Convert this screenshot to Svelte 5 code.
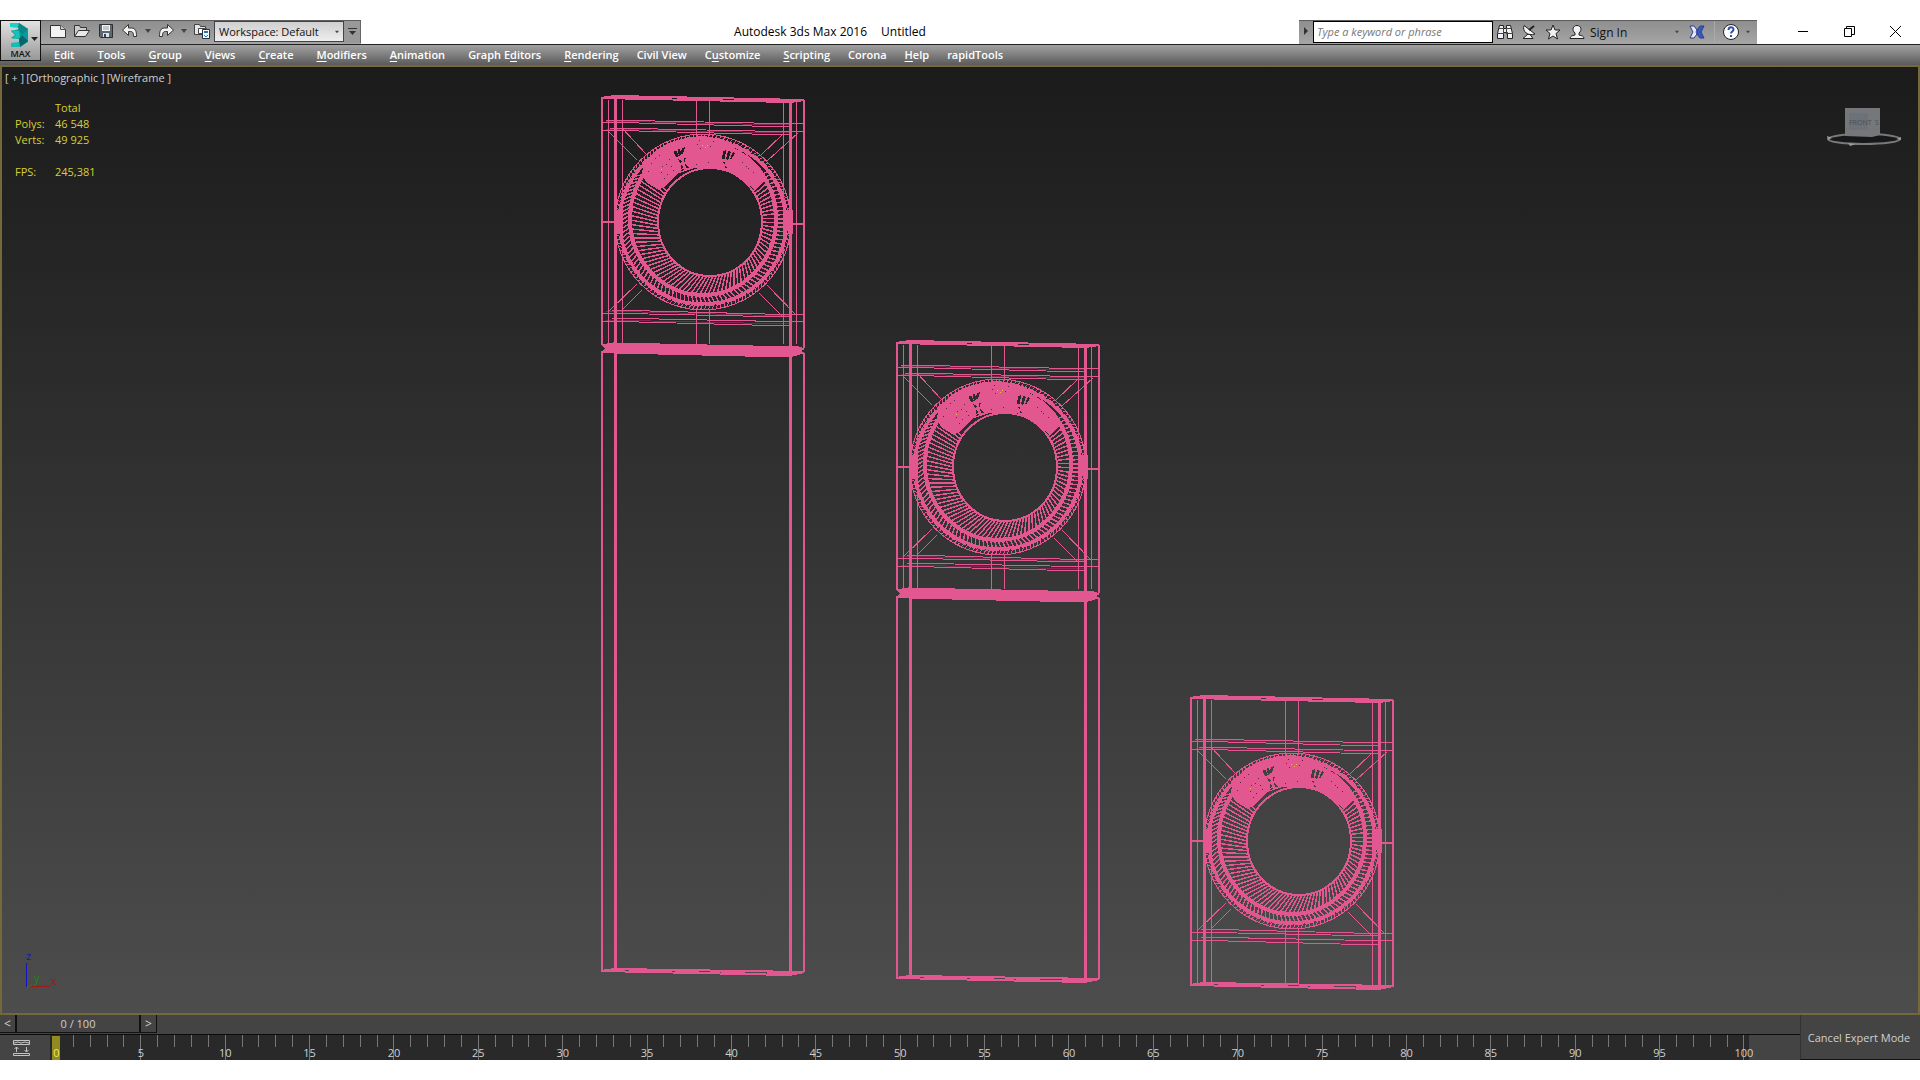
<script lang="ts">
    let keyword = $state('');
    let workspace = $state('Workspace: Default');

    // `key` is the index of the underlined letter, `wide` leaves more room after the item
    const menus = [
        { name: 'Edit', key: 0, wide: true },
        { name: 'Tools', key: 0, wide: true },
        { name: 'Group', key: 0, wide: true },
        { name: 'Views', key: 0, wide: true },
        { name: 'Create', key: 0, wide: true },
        { name: 'Modifiers', key: 0, wide: true },
        { name: 'Animation', key: 0, wide: true },
        { name: 'Graph Editors', key: 7, wide: true },
        { name: 'Rendering', key: 0, wide: false },
        { name: 'Civil View', key: -1, wide: false },
        { name: 'Customize', key: 1, wide: true },
        { name: 'Scripting', key: 0, wide: false },
        { name: 'Corona', key: -1, wide: false },
        { name: 'Help', key: 0, wide: false },
        { name: 'rapidTools', key: -1, wide: false },
    ];

    const frames = Array.from({ length: 101 }, (_, i) => i);

    // speaker cabinets: position of the head, height above it and total height
    const models = [
        { x: 601, y: 98, top: 0, bottom: 873, column: true },
        { x: 896, y: 343, top: 0, bottom: 635, column: true },
        { x: 1190, y: 717, top: -19, bottom: 268, column: false },
    ];

    const thin = [7, 21, 182, 195];
    const middle = [95, 108];

    // spokes between two ellipses [cx, cy, rx, ry]; `skip` leaves out the solid part on top
    function spokes(count: number, a: number[], b: number[], twist: number, skip: boolean) {
        let d = '';
        for (let i = 0; i < count; i++) {
            const t = (i / count) * Math.PI * 2;
            if (skip && t > 3.8 && t < 5.65) continue;
            const x1 = a[0] + a[2] * Math.cos(t);
            const y1 = a[1] + a[3] * Math.sin(t);
            const x2 = b[0] + b[2] * Math.cos(t + twist);
            const y2 = b[1] + b[3] * Math.sin(t + twist);
            d += `M${x1.toFixed(1)} ${y1.toFixed(1)}L${x2.toFixed(1)} ${y2.toFixed(1)}`;
        }
        return d;
    }

    const innerSpokes = spokes(104, [109, 124, 52, 54], [102, 121, 73, 76], 0.05, true);
    const middleSpokes = spokes(120, [102, 121, 73, 76], [102, 124, 83, 82], -0.04, true);
    const outerSpokes = spokes(140, [102, 124, 83, 82], [102, 124, 88, 88], 0.03, false);

    const blob =
        'M41 74L43 65L55 52L70 44L88 39L103 38L121 41L134 47L148 58L160 71L166 80L153 91L138 80L128 73L121 70H93L78 75L68 84L63 90L56 91L45 84Z' +
        'M71 51l3-1 4 8-3 1zM76 49l3-1 1 9-2 1zM81 48l4-1-3 9-2 0z' +
        'M77 61l4 2-1 3zM83 60l2 0-2 5zM80 67l2 2-2 3zM84 66l5 4-4 0zM79 72l4-1-2 2z' +
        'M122 53l3-1-1 9-3 0zM127 53l3 1-3 8-2-1zM132 54l2 1-4 7-1-1zM121 64l3 0 0 3zM124 68l3 2-3 0z' +
        'M124 44l6 2 0 1-6-2zM133 48l5 3-1 1-5-3zM141 53l4 3-1 1-4-3zM148 60l4 4-1 1-4-4zM154 66l3 4-1 1-3-4z';

    const specks = [
        [54, 60], [58, 57], [61, 68], [65, 66], [50, 65], [66, 76], [60, 74], [70, 68], [47, 73],
        [63, 80], [72, 72], [96, 46], [99, 50], [109, 48], [112, 43], [95, 66], [107, 64],
        [98, 42], [141, 64], [147, 70], [152, 74], [145, 68], [68, 61],
    ];
</script>

<svelte:head>
    <title>Autodesk 3ds Max 2016</title>
</svelte:head>

{#snippet arrow()}
    <svg class="arrow" width="6" height="4" viewBox="0 0 6 4"><path d="M0 0h6l-3 4z" fill="#444" /></svg>
{/snippet}

<div class="app">
    <header>
        <button class="logo" aria-label="Application menu">
            <svg width="36" height="27" viewBox="0 0 36 27">
                <path d="M7 1h9l9 6v13l-8 5H8l8-5v-3l-8-1 4-3-4-4 8-2V5z" fill="#0a9c9c" />
                <path d="M7 1h9l-1 5-8-1z" fill="#1ed0c4" />
                <path d="M8 8l8 1 1 7-8 1 4-4z" fill="#16c3bb" />
                <path d="M16 1l9 6-6 6-4-7z" fill="#0b8585" />
                <path d="M19 13l6 6-8 6-1-8z" fill="#07666c" />
                <path d="M8 21l8-1 1 5H8z" fill="#15bdb5" />
                <path d="M28 15h7l-3.500 4z" fill="#222" />
            </svg>
            <span>MAX</span>
        </button>

        <div class="titlebar">
            <div class="quick">
                <button class="tool" aria-label="New">
                    <svg width="18" height="16" viewBox="0 0 18 16"><path d="M1.5 2.5h10l5 4v8h-15z" fill="#f2f2f2" stroke="#333" /><path d="M11.5 2.5v4h5" fill="#ccc" stroke="#555" /></svg>
                </button>
                <button class="tool" aria-label="Open">
                    <svg width="18" height="16" viewBox="0 0 18 16"><path d="M1.5 13.5v-11h5l1 2h6v3" fill="#c8ccd0" stroke="#333" /><path d="M1.5 13.5l4-6h11l-4 6z" fill="#e6e9ec" stroke="#333" /></svg>
                </button>
                <button class="tool" aria-label="Save">
                    <svg width="18" height="16" viewBox="0 0 18 16"><path d="M2.500 1.500h13v13h-12l-1-1z" fill="#5d6673" stroke="#2b2f38" /><path d="M5 2h8v6H5z" fill="#f4f4f4" /><path d="M6 4h6M6 6h6" stroke="#999" /><path d="M6 10h6v4H6z" fill="#dfe3e8" /><path d="M7 11h2v3H7z" fill="#39414d" /></svg>
                </button>
                <button class="tool" aria-label="Undo">
                    <svg width="18" height="16" viewBox="0 0 18 16"><path d="M1.500 7l6-5.500v3.500h3c4 0 5 3 5 8.500h-3c0-4-1-5-3-5h-2v4z" fill="#f2f2f2" stroke="#333" /></svg>
                </button>
                <button class="tool slim" aria-label="Undo list">{@render arrow()}</button>
                <button class="tool" aria-label="Redo">
                    <svg width="18" height="16" viewBox="0 0 18 16"><path d="M16.500 7l-6-5.500v3.500h-3c-4 0-5 3-5 8.500h3c0-4 1-5 3-5h2v4z" fill="#f2f2f2" stroke="#333" /></svg>
                </button>
                <button class="tool slim" aria-label="Redo list">{@render arrow()}</button>
                <button class="tool" aria-label="Project folder">
                    <svg width="18" height="16" viewBox="0 0 18 16"><path d="M1.500 1.500h5l1 2h5v8h-11z" fill="#e4e7ea" stroke="#444" /><path d="M5.500 5.500h8v5h-8z" fill="#fff" stroke="#444" /><path d="M9.500 6.500h7v9h-7z" fill="#f4f8ff" stroke="#234" /><path d="M11 8h4v2h-4z" fill="#2b6cc4" /><path d="M11 12h1v1h-1zM14 12h1v1h-1zM12 13h2v1h-2z" fill="#2b6cc4" /></svg>
                </button>
                <div class="workspace">
                    <select bind:value={workspace} aria-label="Workspace">
                        <option>Workspace: Default</option>
                    </select>
                    {@render arrow()}
                </div>
                <button class="more" aria-label="Customize toolbar">
                    <svg width="9" height="8" viewBox="0 0 9 8"><path d="M0 0h9v1H0zM1 3h7l-3.500 4z" fill="#333" /></svg>
                </button>
            </div>

            <h1><span>Autodesk 3ds Max 2016</span><span>Untitled</span></h1>

            <div class="info">
                <button class="expand" aria-label="Collapse search">
                    <svg width="4" height="8" viewBox="0 0 4 8"><path d="M0 0l4 4-4 4z" fill="#333" /></svg>
                </button>
                <input type="text" placeholder="Type a keyword or phrase" aria-label="Search" bind:value={keyword} />
                <button class="help-tool" aria-label="Search">
                    <svg width="18" height="16" viewBox="0 0 18 16"><path d="M3.500 1.500h4v3h3v-3h4l2 8v5h-5v-6h-4v6h-6v-5z" fill="#eef2f6" stroke="#222" /><path d="M3 4.500h4M11 4.500h4M2 9.500h5M11 9.500h5M7.500 5v5M10.500 5v5" stroke="#444" fill="none" /></svg>
                </button>
                <button class="help-tool" aria-label="Communication center">
                    <svg width="16" height="16" viewBox="0 0 16 16"><path d="M7 10l-5 4.500h10l-3-4z" fill="#f2f4f6" stroke="#222" /><path d="M3 1.500c-2 6 4 11 11 8.500z" fill="#f2f4f6" stroke="#222" /><path d="M8 6l5-4" stroke="#222" stroke-width="2" /></svg>
                </button>
                <button class="help-tool" aria-label="Favorites">
                    <svg width="16" height="16" viewBox="0 0 16 16"><path d="M8 1l2 5h5l-4 3.500 1.500 5.500L8 12l-4.500 3L5 9.500 1 6h5z" fill="#f2f2f2" stroke="#222" /></svg>
                </button>
                <button class="sign-in">
                    <svg width="16" height="16" viewBox="0 0 16 16"><path d="M6 9C2.500 6 4 1.500 8 1.500S13.500 6 10 9v2c3 .5 5 1.500 5 3.500H1C1 12.500 3 11.500 6 11z" fill="#eef2f6" stroke="#222" /></svg>
                    <span>Sign In</span>
                    {@render arrow()}
                </button>
                <button class="help-tool exchange" aria-label="Exchange apps">
                    <svg width="16" height="14" viewBox="0 0 16 14"><path d="M1 1h4l3 4-1 2 1 2-3 4H1l3-6z" fill="#e8ecff" stroke="#2b3f8c" /><path d="M15 1h-4L8 5l1 2-1 2 3 4h4l-3-6z" fill="#3a59c0" stroke="#2b3f8c" /></svg>
                </button>
                <button class="help" aria-label="Help">
                    <svg width="18" height="18" viewBox="0 0 18 18"><circle cx="9" cy="9" r="7.500" fill="#fff" stroke="#222" /><path d="M6.500 7c0-3.500 5-3.500 5-.5 0 2-2.500 2-2.500 4" fill="none" stroke="#2d52b5" stroke-width="2" /><path d="M8 12h2v2H8z" fill="#2d52b5" /></svg>
                    {@render arrow()}
                </button>
            </div>

            <div class="window">
                <button aria-label="Minimize"><svg width="11" height="11" viewBox="0 0 11 11"><path d="M0 5.500h10" stroke="#000" /></svg></button>
                <button aria-label="Restore"><svg width="11" height="11" viewBox="0 0 11 11"><path d="M.5 2.500h7v8h-7zM2.500 2.500v-2h8v8h-3" fill="none" stroke="#000" /></svg></button>
                <button aria-label="Close"><svg width="11" height="11" viewBox="0 0 11 11"><path d="M0 0l11 11M11 0L0 11" stroke="#000" /></svg></button>
            </div>
        </div>

        <nav>
            {#each menus as menu}
                <button class:wide={menu.wide}>{#if menu.key < 0}{menu.name}{:else}{menu.name.slice(0, menu.key)}<u>{menu.name[menu.key]}</u>{menu.name.slice(menu.key + 1)}{/if}</button>
            {/each}
        </nav>
    </header>

    <main>
        <svg class="scene" viewBox="2 67 1916 946" shape-rendering="crispEdges">
            <defs>
                <g id="driver" fill="none" stroke="#e2578f">
                    <path d="M4 23L188 27M4 31L188 35M4 213L188 218M4 222L188 226" stroke="#7c2850" />
                    <path d="M4 22L202 26M0 24L188 29M8 30L202 34M0 32L188 37M10 212L202 217M0 215L188 219M10 220L202 224M0 223L188 228" />
                    <path d="M8 34L36 62M21 30L45 56M181 37L160 57M197 35L166 63M36 186L8 213M41 192L21 212M158 195L181 218M166 187L195 217" />
                    <path d="M0 123H16M0 124H20M188 125H202M188 126H202" />
                    <path d={innerSpokes} stroke-width="1.500" />
                    <path d={middleSpokes} stroke-width="1.500" />
                    <path d={outerSpokes} />
                    <circle cx="102" cy="124" r="88" />
                    <ellipse cx="102" cy="124" rx="85" ry="84" stroke-dasharray="9 2" />
                    <ellipse cx="102" cy="124" rx="83" ry="82" stroke-width="3" />
                    <ellipse cx="102" cy="121" rx="73" ry="76" stroke-width="4" />
                    <ellipse cx="109" cy="124" rx="52" ry="54" stroke-width="2" />
                    <path d="M15 112V136M189 112V136" stroke-width="5" />
                    <path d={blob} fill="#e2578f" fill-rule="evenodd" stroke="none" />
                    {#each specks as [x, y]}
                        <rect {x} {y} width="1" height="1" fill="#5a2440" stroke="none" />
                    {/each}
                    <path d="M101 47h1v1h-1zM104 49h1v1h-1zM106 47h1v1h-1zM60 71h1v1h-1z" fill="#e8c040" stroke="none" />
                </g>
            </defs>
            {#each models as m}
                <g transform="translate({m.x} {m.y})" stroke="#e2578f" fill="none">
                    <use href="#driver" />
                    {#each thin as x}
                        <path d="M{x + 0.5} {m.top + 2}V{m.column ? 246 : m.bottom}" />
                    {/each}
                    {#each middle as x}
                        <path d="M{x + 0.5} {m.top + 2}V38M{x + 0.5} 211V{m.column ? 246 : m.bottom}" />
                    {/each}
                    <path d="M1 {m.top}V{m.column ? 247 : m.bottom}M203 {m.top + 2}V{m.column ? 250 : m.bottom + 2}" stroke-width="2" />
                    <path d="M14 {m.top - 2}V{m.bottom}M189 {m.top + 2}V{m.bottom + 4}" stroke-width="3" />
                    <path d="M0 {m.top}L14 {m.top - 2}L203 {m.top + 2}L189 {m.top + 4}Z" stroke-width="2" />
                    <path d="M8 {m.top - 1}L196 {m.top + 3}" stroke-width="3" stroke-dasharray="46 22" />
                    {#if m.column}
                        <path d="M1 247L12 245L198 249L203 251L198 253L203 255L188 259L12 255L1 254L5 251Z" fill="#e2578f" />
                        <path d="M1 253V{m.bottom}M203 255V{m.bottom + 1}" stroke-width="2" />
                    {/if}
                    <path d="M0 {m.bottom}L14 {m.bottom - 2}L203 {m.bottom + 1}L189 {m.bottom + 4}Z" stroke-width="2" />
                    <path d="M28 {m.bottom}L196 {m.bottom + 3}" stroke-width="3" stroke-dasharray="24 22" />
                </g>
            {/each}
        </svg>

        <div class="labels">
            <button>[ + ]</button><button>[Orthographic ]</button><button>[Wireframe ]</button>
        </div>

        <table class="stats">
            <tbody>
                <tr><th></th><td>Total</td></tr>
                <tr><th>Polys:</th><td>46 548</td></tr>
                <tr><th>Verts:</th><td>49 925</td></tr>
                <tr class="fps"><th>FPS:</th><td>245,381</td></tr>
            </tbody>
        </table>

        <svg class="cube" width="80" height="42" viewBox="0 0 80 42">
            <ellipse cx="40" cy="32" rx="36" ry="5" fill="#161819" stroke="#77797b" stroke-width="2" />
            <path d="M3 29l5 2-4 2zM77 30l-5 2 5 1zM24 36l8 1-6 2z" fill="#9a9c9e" />
            <path d="M21 1h35v27l-8 2-27-1z" fill="#76777a" />
            <path d="M25 6h19v17H25z" fill="#6d7178" />
            <text x="25" y="18" font-size="7" fill="#4b4e54">FRONT</text>
            <text x="51" y="18" font-size="7" fill="#4b4e54">S</text>
        </svg>

        <svg class="axis" width="44" height="50" viewBox="0 0 44 50">
            <path d="M5.500 20v24" stroke="#1414b8" />
            <path d="M8 43.500h21" stroke="#a01818" />
            <path d="M6 44l5-2" stroke="#158a15" />
            <text x="5" y="17" font-size="11" fill="#1414b8">z</text>
            <text x="13" y="39" font-size="11" fill="#158a15">y</text>
            <text x="30" y="42" font-size="11" fill="#a01818">x</text>
        </svg>
    </main>

    <footer>
        <div class="time">
            <div class="slider">
                <button class="step" aria-label="Previous frame">&lt;</button>
                <button class="handle">0 / 100</button>
                <button class="step" aria-label="Next frame">&gt;</button>
            </div>
            <div class="track">
                <button class="curve" aria-label="Open mini curve editor">
                    <svg width="18" height="18" viewBox="0 0 18 18"><path d="M.5 1.500h16v4H.5zM.5 14.500h16v2H.5z" fill="none" stroke="#c4c4c4" /><path d="M1 4l4-1 3 1 4-1 4 1M3.500 13V8M1.500 10l2-2 2 2M13.500 8v5M11.500 11l2 2 2-2" fill="none" stroke="#c4c4c4" /></svg>
                </button>
                <div class="ruler">
                    {#each frames as frame}
                        <div class="frame" class:major={frame % 5 === 0} class:current={frame === 0}>
                            {#if frame % 5 === 0}<span>{frame}</span>{/if}
                        </div>
                    {/each}
                </div>
            </div>
        </div>
        <button class="expert">Cancel Expert Mode</button>
    </footer>
</div>

<style>
    :global(body) {
        margin: 0;
        background: #fff;
    }
    .app {
        box-sizing: border-box;
        min-height: 100vh;
        padding: 20px 0;
        display: flex;
        flex-direction: column;
        font-family: "Open Sans", "Noto Sans", sans-serif;
        font-size: 12px;
    }
    button, input, select {
        font: inherit;
        color: inherit;
        margin: 0;
        padding: 0;
        border: none;
        background: none;
        border-radius: 0;
    }
    button {
        display: flex;
        align-items: center;
        justify-content: center;
        white-space: nowrap;
    }
    svg {
        display: block;
        flex: none;
    }
    header {
        position: relative;
    }
    .logo {
        position: absolute;
        left: 0;
        top: 0;
        width: 41px;
        height: 41px;
        flex-direction: column;
        border: 1px solid #111;
        background: linear-gradient(#e2e2e2, #989898);
        font-size: 9px;
        line-height: 10px;
        font-weight: 600;
        color: #111;
    }
    .titlebar {
        display: flex;
        height: 24px;
        padding-left: 41px;
    }
    .quick, .info {
        display: flex;
        align-items: flex-start;
        box-sizing: border-box;
        border-top: 1px solid #5c5c5c;
        background: linear-gradient(#8e8e8e, #a6a6a6);
    }
    .quick {
        padding-left: 5px;
    }
    .tool {
        width: 24px;
        height: 20px;
    }
    .tool.slim {
        width: 12px;
    }
    .workspace {
        position: relative;
        display: flex;
        align-items: center;
    }
    .workspace select {
        appearance: none;
        box-sizing: border-box;
        width: 130px;
        height: 21px;
        padding-left: 4px;
        border: 1px solid #444;
        background: linear-gradient(#cfcfcf, #eee);
        font-size: 11px;
        font-weight: 500;
        color: #111;
    }
    .workspace .arrow {
        position: absolute;
        right: 5px;
        width: 4px;
    }
    .more {
        width: 17px;
        height: 22px;
        border-right: 1px solid #666;
        background: #999;
    }
    h1 {
        flex: 1;
        display: flex;
        align-items: center;
        justify-content: center;
        gap: 14px;
        margin: 0;
        padding-bottom: 2px;
        font-size: 12px;
        font-weight: 400;
        color: #000;
    }
    .info {
        width: 458px;
    }
    .expand {
        width: 14px;
        height: 20px;
    }
    .info input {
        box-sizing: border-box;
        width: 180px;
        height: 22px;
        padding: 0 3px 2px;
        border: 1px solid #000;
        background: #fff;
        font-style: italic;
        font-size: 11px;
        color: #222;
    }
    .info input::placeholder {
        color: #777;
        opacity: 1;
    }
    .help-tool {
        width: 24px;
        height: 22px;
    }
    .sign-in {
        flex: 1;
        justify-content: flex-start;
        height: 22px;
        padding: 0 0 0 4px;
        gap: 5px;
        color: #111;
    }
    .sign-in .arrow {
        margin-left: auto;
        width: 4px;
    }
    .exchange {
        width: 36px;
        border-right: 1px solid #aaa;
    }
    .help {
        width: 42px;
        height: 22px;
        gap: 6px;
    }
    .help .arrow {
        width: 4px;
    }
    .window {
        display: flex;
        margin-left: 23px;
        padding-right: 2px;
    }
    .window button {
        width: 46px;
        height: 22px;
    }
    nav {
        display: flex;
        height: 20px;
        padding-left: 54px;
        border-top: 1px solid #222;
        background: linear-gradient(#a2a2a2, #5a5a5a);
        font-size: 11px;
        font-weight: 600;
    }
    nav button {
        margin-right: 18px;
        padding-bottom: 1px;
        color: #fff;
    }
    nav button.wide {
        margin-right: 23px;
    }
    u {
        text-underline-offset: 2px;
    }
    main {
        position: relative;
        flex: 1;
        min-height: 400px;
        border: 2px solid #75683a;
        background: linear-gradient(#1b1b1b, #4d4d4d);
    }
    .scene {
        position: absolute;
        inset: 0;
        width: 100%;
        height: 100%;
    }
    .labels {
        position: relative;
        display: flex;
        gap: 2px;
        padding: 3px 0 0 3px;
        color: #d0d0d0;
        font-size: 11px;
        line-height: 16px;
    }
    .stats {
        position: relative;
        margin: 14px 0 0 13px;
        border-collapse: collapse;
        color: #d8cf35;
        font-size: 11px;
        line-height: 16px;
    }
    .stats th {
        width: 40px;
        padding: 0;
        font-weight: 400;
        text-align: left;
    }
    .stats td {
        padding: 0;
    }
    .stats .fps > * {
        padding-top: 16px;
    }
    .cube {
        position: absolute;
        top: 40px;
        right: 14px;
    }
    .axis {
        position: absolute;
        left: 19px;
        bottom: 20px;
    }
    footer {
        display: flex;
        color: #d0d0d0;
        background: #444;
    }
    .time {
        flex: 1;
    }
    .slider {
        display: flex;
        height: 19px;
        border-bottom: 1px solid #0c0c0c;
    }
    .slider button {
        box-sizing: border-box;
        height: 18px;
        border: solid #111;
        border-width: 0 1px 1px 0;
    }
    .step {
        width: 16px;
    }
    .slider .handle {
        width: 125px;
        border-width: 0 2px 1px 1px;
        font-size: 11px;
    }
    .track {
        display: flex;
        height: 25px;
    }
    .curve {
        width: 50px;
        padding-right: 6px;
    }
    .ruler {
        flex: 1;
        display: flex;
        margin-right: 51px;
        background: #292929;
    }
    .frame {
        flex: 1;
        min-width: 0;
        display: flex;
        justify-content: center;
        align-items: flex-end;
        background: linear-gradient(#777, #777) center top / 1px 12px no-repeat;
    }
    .frame.major {
        background-size: 1px 100%;
    }
    .frame:first-child {
        margin-left: -2px;
    }
    .frame:last-child {
        margin-right: -3px;
    }
    .frame span {
        font-size: 11px;
        line-height: 14px;
    }
    .frame.current {
        background: linear-gradient(#918a20, #918a20) center bottom / 8px 24px no-repeat;
        color: #eee85a;
    }
    .expert {
        width: 120px;
        padding-right: 3px;
        border-left: 1px solid #333;
        border-bottom: 1px solid #111;
        font-size: 11px;
    }
</style>
